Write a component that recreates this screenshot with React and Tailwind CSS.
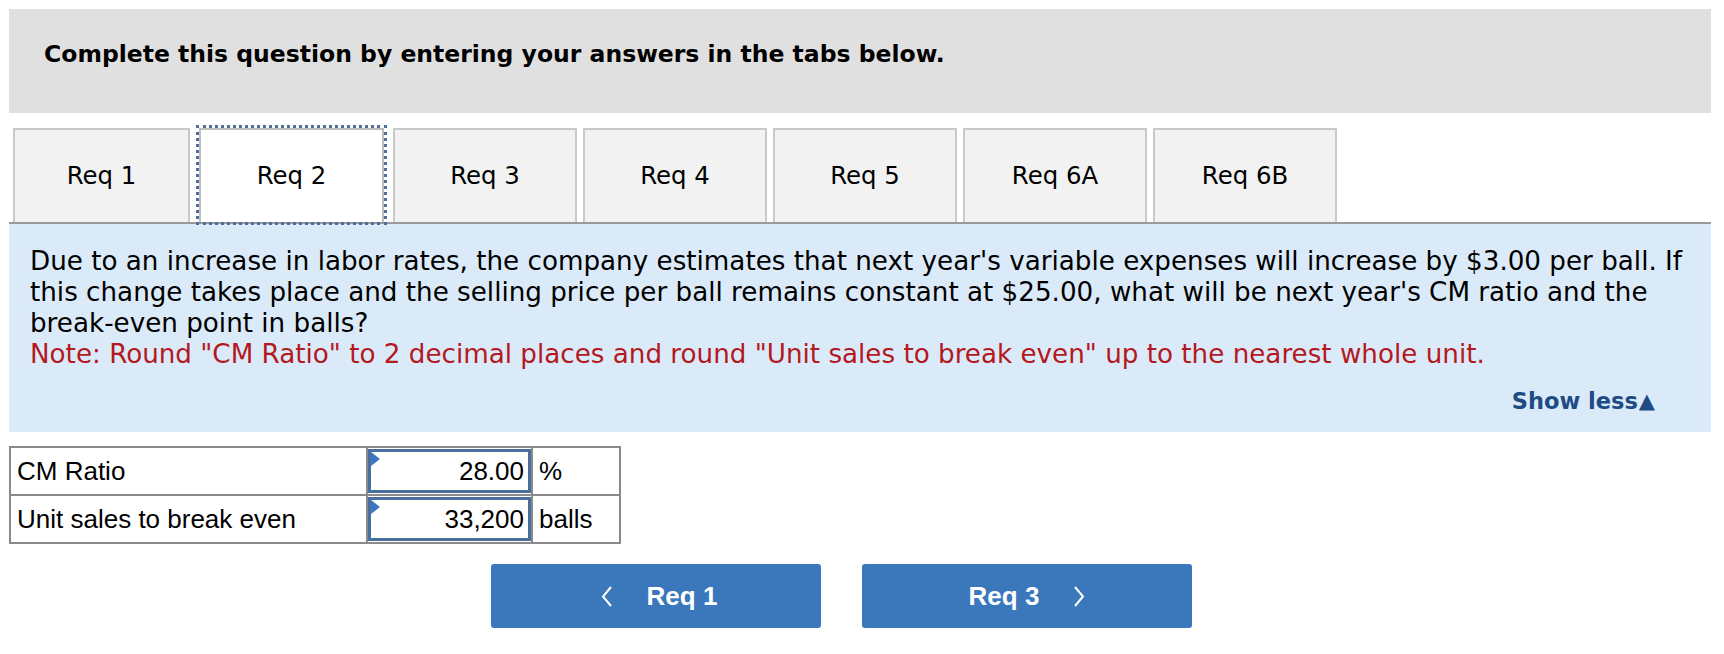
import React from 'react';

const tabs = ["Req 1", "Req 2", "Req 3", "Req 4", "Req 5", "Req 6A", "Req 6B"];

const rows = [
    { label: "CM Ratio", value: "28.00", unit: "%" },
    { label: "Unit sales to break even", value: "33,200", unit: "balls" },
];

const App = () => {
    const active = 1;

    return (
        <div className="w-[1724px] h-[654px] bg-white pt-[9px] pl-[9px] font-['DejaVu_Sans',sans-serif] text-black">
            <div className="w-[1702px] h-[104px] bg-[#e0e0e0] pl-[35px] pt-[31px]">
                <h1 className="text-[23.5px] font-bold leading-[28px]">Complete this question by entering your answers in the tabs below.</h1>
            </div>

            <div className="flex items-end pl-[4px] mt-[15px] h-[94px]">
                {tabs.map((t, i) =>
                    i === active ? (
                        <div key={i}
                             className="relative z-10 w-[185px] h-[94px] ml-[9px] mr-[9px] bg-white border-2 border-b-0 border-[#bdbdbd] outline-[3px] outline-dotted outline-[#4f6e9c] flex items-center justify-center text-[24.4px]">
                            {t}
                        </div>
                    ) : (
                        <div key={i}
                             className={(i === 0 ? "w-[177px]" : "w-[184px]") + " h-[94px] bg-[#f2f2f2] border-2 border-b-0 border-[#c9c9c9] flex items-center justify-center text-[24.4px] " + (i > 2 ? "ml-[6px]" : "")}>
                            {t}
                        </div>
                    )
                )}
            </div>

            <div className="w-[1702px] h-[210px] bg-[#dbeaf8] border-t-2 border-[#9a9a9a] pl-[21px] pr-[8px] pt-[22px] flex flex-col">
                <p className="text-[26.2px] leading-[31px]">
                    Due to an increase in labor rates, the company estimates that next year's variable expenses will increase by $3.00 per ball. If this change takes place and the selling price per ball remains constant at $25.00, what will be next year's CM ratio and the break-even point in balls?
                </p>
                <p className="text-[26.2px] leading-[31px] text-[#b3191e]">
                    Note: Round "CM Ratio" to 2 decimal places and round "Unit sales to break even" up to the nearest whole unit.
                </p>
                <div className="flex justify-end mt-[15px] pr-[48px]">
                    <span className="text-[22.5px] font-bold text-[#1f4b85] flex items-center">
                        Show less<span className="text-[21px] ml-[1px]">▲</span>
                    </span>
                </div>
            </div>

            <table className="mt-[14px] border-collapse font-['Liberation_Sans',Arial,sans-serif] text-[26px]">
                <tbody>
                {rows.map((r, i) => (
                    <tr key={i} className="h-[48px]">
                        <td className="w-[357px] border-2 border-[#8a8a8a] pl-[6px]">{r.label}</td>
                        <td className="w-[165px] border-2 border-[#8a8a8a] p-0">
                            <div className="relative h-[44px] border-[3px] border-[#4a6f9c] flex items-center justify-end pr-[4px]">
                                <span className="absolute left-0 top-0 w-0 h-0 border-t-[7px] border-b-[7px] border-l-[9px] border-t-transparent border-b-transparent border-l-[#3a78c3]"></span>
                                {r.value}
                            </div>
                        </td>
                        <td className="w-[88px] border-2 border-[#8a8a8a] pl-[6px]">{r.unit}</td>
                    </tr>
                ))}
                </tbody>
            </table>

            <div className="flex gap-[41px] ml-[482px] mt-[20px] font-['Liberation_Sans',Arial,sans-serif]">
                <button className="w-[330px] h-[64px] bg-[#3b77bb] rounded-[3px] text-white text-[26px] font-bold flex items-center justify-center gap-[34px] pl-[6px]">
                    <svg width="12" height="21" viewBox="0 0 12 21" fill="none" stroke="white" strokeWidth="2"><path d="M10 1 L2 10.5 L10 20"/></svg>
                    <span>Req 1</span>
                </button>
                <button className="w-[330px] h-[64px] bg-[#3b77bb] rounded-[3px] text-white text-[26px] font-bold flex items-center justify-center gap-[34px]">
                    <span>Req 3</span>
                    <svg width="12" height="21" viewBox="0 0 12 21" fill="none" stroke="white" strokeWidth="2"><path d="M2 1 L10 10.5 L2 20"/></svg>
                </button>
            </div>
        </div>
    );
};

export default App;
